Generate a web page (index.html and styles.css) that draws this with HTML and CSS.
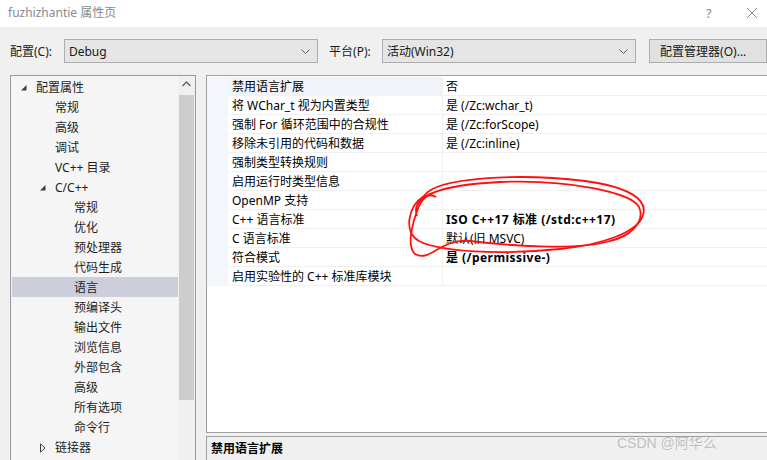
FILE: index.html
```html
<!DOCTYPE html>
<html lang="zh-CN">
<head>
<meta charset="utf-8">
<title>fuzhizhantie 属性页</title>
<link rel="stylesheet" href="styles.css">
</head>
<body>
<div class="titlebar">
  <span class="title">fuzhizhantie 属性页</span>
  <span class="tb-help">?</span>
  <svg class="tb-close" width="12" height="12" viewBox="0 0 12 12"><path d="M1 1L11 11M11 1L1 11" stroke="#8a8a8a" stroke-width="1" fill="none"/></svg>
</div>

<div class="toolbar">
  <span class="lbl lbl-cfg">配置(C):</span>
  <div class="combo"><span>Debug</span><svg class="chev" width="9" height="6" viewBox="0 0 9 6"><path d="M0.5 0.5L4.5 4.5L8.5 0.5" stroke="#606060" fill="none"/></svg></div>
  <span class="lbl lbl-plat">平台(P):</span>
  <div class="combo"><span>活动(Win32)</span><svg class="chev" width="9" height="6" viewBox="0 0 9 6"><path d="M0.5 0.5L4.5 4.5L8.5 0.5" stroke="#606060" fill="none"/></svg></div>
  <div class="btn">配置管理器(O)...</div>
</div>

<div class="main">
  <div class="tree">
    <div class="tree-list">
      <div class="trow l1"><span class="tw"><svg width="6" height="6" viewBox="0 0 6 6"><path d="M0 5.5L5.5 5.5L5.5 0Z" fill="#404040"/></svg></span>配置属性</div>
      <div class="trow l2">常规</div>
      <div class="trow l2">高级</div>
      <div class="trow l2">调试</div>
      <div class="trow l2">VC++ 目录</div>
      <div class="trow l2a"><span class="tw"><svg width="6" height="6" viewBox="0 0 6 6"><path d="M0 5.5L5.5 5.5L5.5 0Z" fill="#404040"/></svg></span>C/C++</div>
      <div class="trow l3">常规</div>
      <div class="trow l3">优化</div>
      <div class="trow l3">预处理器</div>
      <div class="trow l3">代码生成</div>
      <div class="trow l3 sel">语言</div>
      <div class="trow l3">预编译头</div>
      <div class="trow l3">输出文件</div>
      <div class="trow l3">浏览信息</div>
      <div class="trow l3">外部包含</div>
      <div class="trow l3">高级</div>
      <div class="trow l3">所有选项</div>
      <div class="trow l3">命令行</div>
      <div class="trow l2a"><span class="tw"><svg width="6" height="10" viewBox="0 0 6 10"><path d="M0.5 0.8L5 5L0.5 9.2Z" stroke="#404040" fill="none"/></svg></span>链接器</div>
    </div>
    <div class="vscroll">
      <div class="sb-up"><svg width="9" height="6" viewBox="0 0 9 6"><path d="M0.5 5L4.5 1L8.5 5" stroke="#606060" stroke-width="1.3" fill="none"/></svg></div>
      <div class="sb-thumb"></div>
    </div>
  </div>

  <div class="right">
    <div class="grid">
      <div class="grow first"><span class="gm"></span><span class="gn">禁用语言扩展</span><span class="gv">否</span></div>
      <div class="grow"><span class="gm"></span><span class="gn">将 WChar_t 视为内置类型</span><span class="gv">是 (/Zc:wchar_t)</span></div>
      <div class="grow"><span class="gm"></span><span class="gn">强制 For 循环范围中的合规性</span><span class="gv">是 (/Zc:forScope)</span></div>
      <div class="grow"><span class="gm"></span><span class="gn">移除未引用的代码和数据</span><span class="gv">是 (/Zc:inline)</span></div>
      <div class="grow"><span class="gm"></span><span class="gn">强制类型转换规则</span><span class="gv"></span></div>
      <div class="grow"><span class="gm"></span><span class="gn">启用运行时类型信息</span><span class="gv"></span></div>
      <div class="grow"><span class="gm"></span><span class="gn">OpenMP 支持</span><span class="gv"></span></div>
      <div class="grow"><span class="gm"></span><span class="gn">C++ 语言标准</span><span class="gv bold">ISO C++17 标准 (/std:c++17)</span></div>
      <div class="grow"><span class="gm"></span><span class="gn">C 语言标准</span><span class="gv">默认(旧 MSVC)</span></div>
      <div class="grow"><span class="gm"></span><span class="gn">符合模式</span><span class="gv bold">是 (/permissive-)</span></div>
      <div class="grow"><span class="gm"></span><span class="gn">启用实验性的 C++ 标准库模块</span><span class="gv"></span></div>
    </div>
    <div class="desc"><b>禁用语言扩展</b></div>
  </div>
</div>

<div class="watermark">CSDN @阿华么</div>

<svg class="scribble" width="767" height="460" viewBox="0 0 767 460">
  <path d="M424 196 C 436 177, 520 173, 585 181 C 630 187, 648 200, 643 215 C 638 233, 600 245, 560 249 C 500 255, 440 252, 419 241 C 403 232, 408 206, 424 196" stroke="#ff1010" stroke-width="1.8" fill="none"/>
  <path d="M417 216 C 410 196, 440 185, 500 182 C 570 179, 632 193, 639 207 C 646 223, 628 237, 610 241 C 580 250, 520 247, 470 241 C 440 238, 430 263, 415 254 C 407 247, 411 226, 419 206 C 424 196, 430 193, 436 197" stroke="#ff1010" stroke-width="1.8" fill="none"/>
</svg>
</body>
</html>
```

FILE: styles.css
```css
* { box-sizing: border-box; }

body {
  margin: 0;
  width: 767px;
  height: 460px;
  overflow: hidden;
  position: relative;
  background: #f0f0f0;
  color: #1a1a1a;
  font-family: "Noto Sans", "Noto Sans CJK SC", sans-serif;
  font-size: 12px;
  line-height: 16px;
}

.titlebar {
  height: 27px;
  background: #ffffff;
  display: flex;
  align-items: center;
  padding: 0 0 2px 8px;
  color: #8a8a8a;
}
.title { flex: 1; }
.tb-help { width: 14px; margin-right: 26px; font-size: 13px; color: #8a8a8a; }
.tb-close { margin-right: 9px; }

.toolbar {
  display: flex;
  align-items: center;
  height: 24px;
  margin-top: 12px;
  padding-left: 10px;
  white-space: nowrap;
}
.lbl { color: #1a1a1a; padding-top: 1px; }
.lbl-cfg { width: 55px; }
.lbl-plat { width: 54px; margin-left: 11px; }

.combo {
  width: 259px;
  height: 24px;
  border: 1px solid #adadad;
  background: #e5e5e5;
  display: flex;
  align-items: center;
  padding: 1px 4px 0 4px;
}
.combo span { flex: 1; }
.chev { margin-right: 3px; }

.btn {
  margin-left: 13px;
  width: 120px;
  height: 24px;
  border: 1px solid #adadad;
  background: #e1e1e1;
  display: flex;
  align-items: center;
  padding: 1px 0 0 10px;
}

.main {
  display: flex;
  margin-top: 12px;
  padding-left: 10px;
  gap: 10px;
  height: 400px;
}

.tree {
  width: 186px;
  height: 400px;
  border: 1px solid #999999;
  background: #f5f5f5;
  display: flex;
}
.tree-list {
  flex: 1;
  padding-top: 1px;
  padding-left: 1px;
}
.trow {
  height: 20px;
  display: flex;
  align-items: center;
  padding-top: 1px;
  color: #1e1e1e;
  white-space: nowrap;
}
.tw { width: 15px; display: flex; align-items: center; }
.l1 { padding-left: 9px; }
.l2 { padding-left: 43px; }
.l2a { padding-left: 28px; }
.l3 { padding-left: 62px; }
.sel { background: #cccedb; }

.vscroll {
  width: 17px;
  background: #f0f0f0;
  display: flex;
  flex-direction: column;
  align-items: center;
}
.sb-up {
  height: 18px;
  width: 100%;
  display: flex;
  align-items: center;
  justify-content: center;
  padding-bottom: 2px;
}
.sb-thumb {
  width: 15px;
  height: 305px;
  margin-top: 1px;
  background: #cdcdcd;
}

.right {
  flex: 1;
  display: flex;
  flex-direction: column;
  gap: 3px;
}

.grid {
  height: 358px;
  border: 1px solid #a0a0a0;
  border-right: none;
  background: #ffffff;
  padding-top: 1px;
}
.grow {
  display: flex;
  height: 19px;
  color: #000000;
  white-space: nowrap;
}
.gm {
  width: 21px;
  background: #f3f6fb;
  flex: none;
}
.gn {
  width: 214px;
  flex: none;
  padding: 2px 0 0 4px;
  border-bottom: 1px solid #f0f0f0;
}
.gv {
  flex: 1;
  padding: 2px 0 0 3px;
  border-left: 1px solid #f0f0f0;
  border-bottom: 1px solid #f0f0f0;
}
.first .gn { background: #f0f4fa; }
.bold { font-weight: bold; letter-spacing: 0.45px; }

.desc {
  flex: 1;
  border: 1px solid #a0a0a0;
  border-right: none;
  background: #f0f0f0;
  padding: 4px 0 0 4px;
  color: #000;
}

.watermark {
  position: absolute;
  left: 617px;
  top: 435px;
  font-family: "Liberation Sans", "Noto Sans CJK SC", sans-serif;
  font-size: 14px;
  color: rgba(170, 170, 170, 0.7);
}

.scribble {
  position: absolute;
  left: 0;
  top: 0;
  pointer-events: none;
}
```
